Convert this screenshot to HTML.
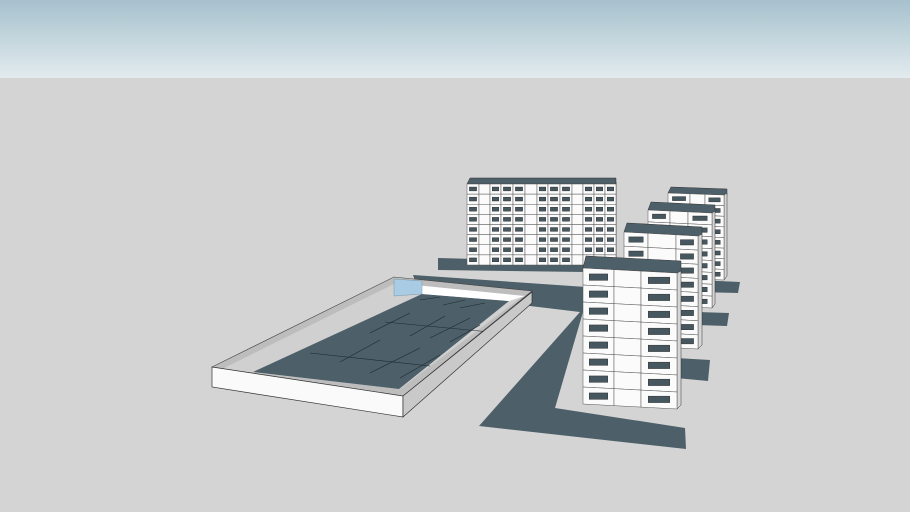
<!DOCTYPE html>
<html><head><meta charset="utf-8"><style>
html,body{margin:0;padding:0;width:910px;height:512px;overflow:hidden;background:#d3d3d3}
svg{display:block}
</style></head><body>
<svg id="s" width="910" height="512" viewBox="0 0 910 512" xmlns="http://www.w3.org/2000/svg">
<defs>
<linearGradient id="sky" x1="0" y1="0" x2="0" y2="1">
<stop offset="0" stop-color="#a6c1cd"/><stop offset="1" stop-color="#e2ebee"/>
</linearGradient>
</defs>
<rect x="0" y="0" width="910" height="78" fill="url(#sky)"/>
<rect x="0" y="78" width="910" height="434" fill="#d4d4d4"/>
<g fill="#4d5f68">
<polygon points="438,258 586,262 586,272 438,270"/>
<polygon points="413,275 586,287 586,312 583,312 555,408 685,428 686,449 479,426 580,312 530,306 420,295"/>
<polygon points="697,280 740,282 738,293 697,292"/>
<polygon points="697,312 729,313 727,326 697,325"/>
<polygon points="676,358 710,360 708,381 676,378"/>
</g>
<!-- pool -->
<polygon points="212,367 394,277 532,291 403,396" fill="#bdbdbd" stroke="#444" stroke-width="0.6"/>
<polygon points="222,369 396,283 523,296 400,389" fill="#d0d0d0"/>
<polygon points="253,372 422,294 509,301 399,389" fill="#4d5f68"/>
<polygon points="394,283 525,296 509,301 422,294 422,283" fill="#fff"/>
<polygon points="394,279 422,281 422,294 394,296" fill="#a9cbe3" stroke="#6b8aa0" stroke-width="0.4"/>
<g stroke="#1e2a30" stroke-width="0.6">
<line x1="310" y1="353" x2="430" y2="366"/><line x1="385" y1="322" x2="490" y2="332"/>
<line x1="340" y1="362" x2="380" y2="340"/><line x1="370" y1="373" x2="420" y2="348"/>
<line x1="400" y1="378" x2="440" y2="355"/><line x1="370" y1="333" x2="410" y2="313"/>
<line x1="410" y1="336" x2="445" y2="316"/><line x1="430" y1="338" x2="470" y2="318"/>
<line x1="450" y1="342" x2="480" y2="325"/><line x1="420" y1="300" x2="440" y2="297"/>
<line x1="443" y1="305" x2="465" y2="300"/><line x1="460" y1="308" x2="485" y2="303"/>
</g>
<polygon points="212,367 403,396 403,417 212,387" fill="#fafafa" stroke="#333" stroke-width="0.7"/>
<polygon points="403,396 532,292 532,303 403,417" fill="#c9c9c9" stroke="#333" stroke-width="0.7"/>
<g id="bld"></g>
</svg>
<script>
var g=document.getElementById('bld'),NS='http://www.w3.org/2000/svg';
function el(t,a){var e=document.createElementNS(NS,t);for(var k in a)e.setAttribute(k,a[k]);g.appendChild(e);return e;}
function tower(cols,top,bot,floors,roofH,skew,side){
 var x0=cols[0],x1=cols[cols.length-1];
 el('polygon',{points:(x0+3)+','+(top-roofH)+' '+(x1+side)+','+(top-roofH+skew)+' '+(x1+side)+','+(top+skew)+' '+x0+','+top,fill:'#4d5f68',stroke:'#333','stroke-width':0.5});
 el('polygon',{points:x1+','+(top+skew)+' '+(x1+side)+','+(top+skew-2)+' '+(x1+side)+','+(bot+skew-4)+' '+x1+','+(bot+skew),fill:'#d6d6d6',stroke:'#333','stroke-width':0.5});
 var fh=(bot-top)/floors;
 for(var c=0;c<cols.length-1;c++){
  var a=cols[c],b=cols[c+1];
  for(var f=0;f<floors;f++){
   var sk=skew*(a-x0)/(x1-x0),sk2=skew*(b-x0)/(x1-x0);
   var y=top+f*fh;
   el('polygon',{points:a+','+(y+sk)+' '+b+','+(y+sk2)+' '+b+','+(y+fh+sk2)+' '+a+','+(y+fh+sk),fill:'#fbfbfb',stroke:'#555','stroke-width':0.5});
   if(cols.win[c]){var w=(b-a),ym=y+(sk+sk2)/2;
    el('rect',{x:a+w*0.2,y:ym+fh*0.3,width:w*0.6,height:fh*0.38,fill:'#46575f',stroke:'#222','stroke-width':0.4});}
  }
 }
}
var s=[467,479,490,501,513,525,537,548,560,572,583,594,605,616];s.win=[1,0,1,1,1,0,1,1,1,0,1,1,1];
tower(s,184,265,8,6,0,0);
var t4=[668,690,705,724];t4.win=[1,0,1];tower(t4,193,278,8,6,2,3);
var t3=[648,670,688,712];t3.win=[1,0,1];tower(t3,210,305,8,8,3,3);
var t2=[624,648,676,698];t2.win=[1,0,1];tower(t2,232,345,8,9,4,4);
var t1=[583,614,641,677];t1.win=[1,0,1];tower(t1,268,404,8,12,5,4);
</script>
</body></html>
